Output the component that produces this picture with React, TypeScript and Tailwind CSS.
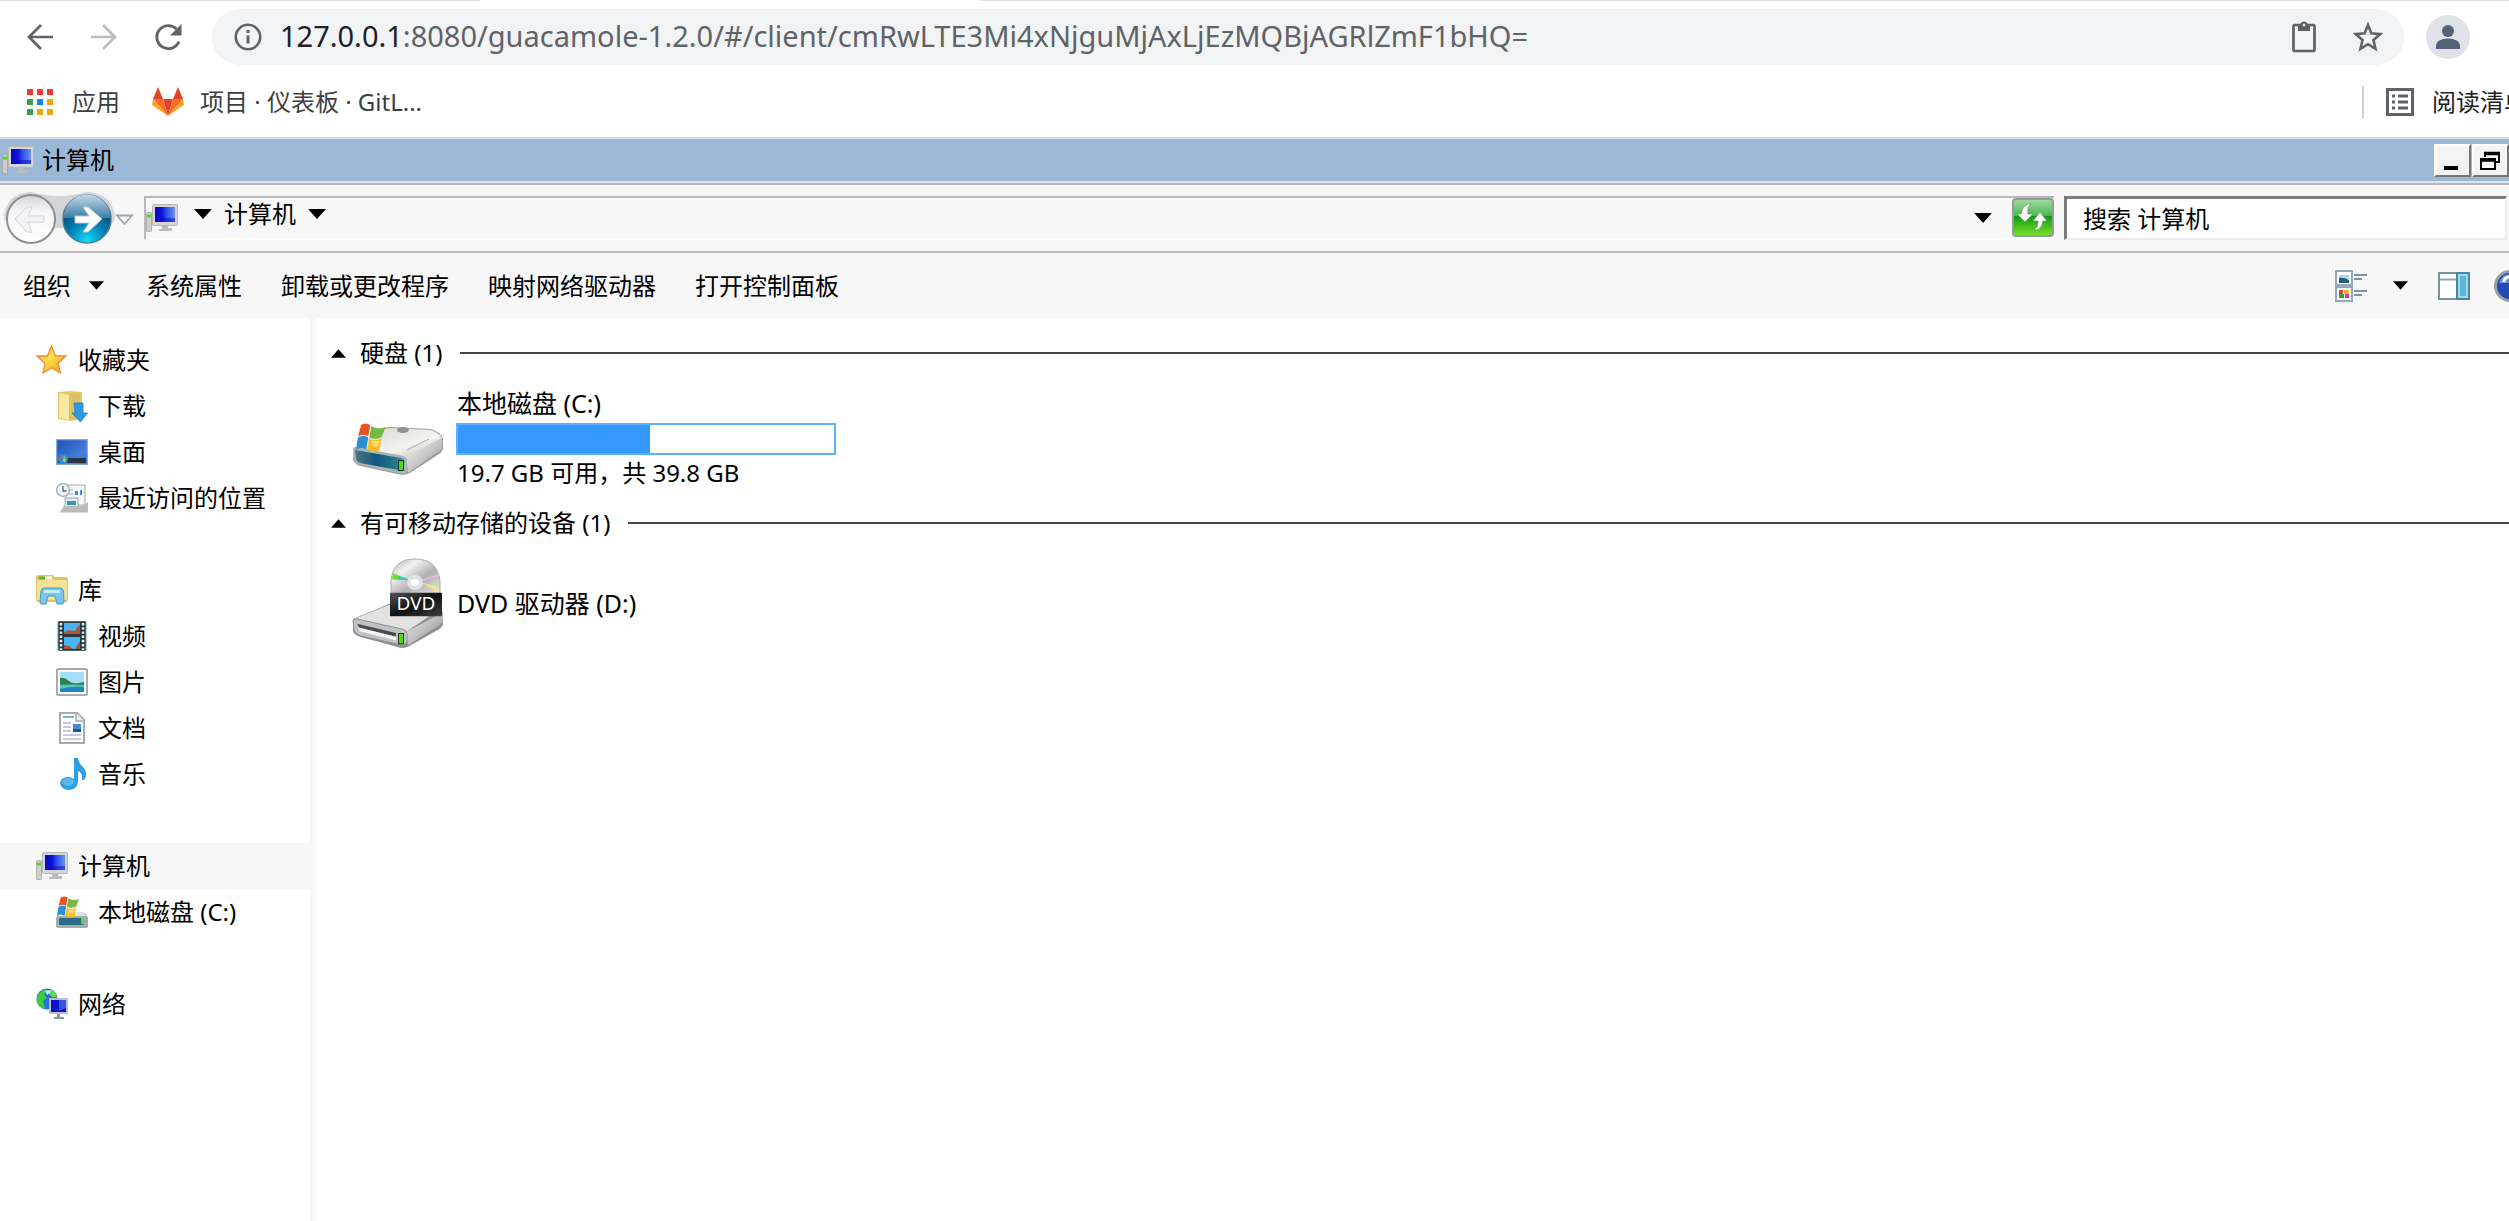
import type { ReactNode } from "react";

const FONT = "font-['Noto_Sans','Noto_Sans_CJK_SC',sans-serif]";

function Triangle({ up = false, size = "md" }: { up?: boolean; size?: "sm" | "md" }) {
  return (
    <svg viewBox="0 0 16 9" className={size === "md" ? "h-[10px] w-[18px] shrink-0" : "h-[9px] w-[15px] shrink-0"} aria-hidden>
      <path d={up ? "M8 0L16 9H0z" : "M0 0H16L8 9z"} fill="#000" />
    </svg>
  );
}

function Computer() {
  return (
    <svg viewBox="0 0 32 28" className="h-7 w-8 shrink-0" aria-hidden>
      <defs>
        <linearGradient id="screen" x1="0" y1="0" x2="1" y2="0">
          <stop offset="0" stopColor="#0a0ab4" />
          <stop offset=".35" stopColor="#0d10dc" />
          <stop offset=".6" stopColor="#2f55e8" />
          <stop offset="1" stopColor="#6d90f0" />
        </linearGradient>
      </defs>
      <rect x="0.5" y="8.5" width="5" height="19" rx="1" fill="#cfcfca" stroke="#a2a29f" strokeWidth="0.8" />
      <rect x="1" y="10.500" width="4" height="3" fill="#4bdc2c" />
      <rect x="6.500" y=".5" width="25" height="21" rx="1" fill="#d3d5d9" stroke="#b4b6ba" />
      <rect x="9" y="3" width="20" height="15" fill="url(#screen)" />
      <path d="M9 14h20v4H9z" fill="#0a10c8" opacity=".55" />
      <path d="M16 22h6v2h4v3H13v-2h3z" fill="#b9bbbd" />
    </svg>
  );
}

function Star() {
  return (
    <svg viewBox="0 0 32 30" className="h-[30px] w-8" aria-hidden>
      <defs>
        <linearGradient id="star" x1="0" y1="0" x2="1" y2="1">
          <stop offset="0" stopColor="#ff9d2a" />
          <stop offset=".45" stopColor="#ffe04c" />
          <stop offset="1" stopColor="#f08a12" />
        </linearGradient>
      </defs>
      <path d="M15.500 1L19.500 11H30l-8 7.500L24.500 28l-9-5-8.500 5 2-9.500L1 11h10.500z" fill="url(#star)" stroke="#ee8c35" strokeWidth="1.300" />
    </svg>
  );
}

function Downloads() {
  return (
    <svg viewBox="0 0 32 32" className="h-8 w-8" aria-hidden>
      <path d="M2 2l12-1 12 1v27l-12 2-12-2z" fill="#e3c766" />
      <path d="M3 3l10 2v25l-10-2z" fill="#f7e9a4" />
      <path d="M13 5l11-3v10h-6v17l-5 2z" fill="#dcc168" />
      <path d="M18 13h9v10h4.500L24.500 32 16 23h3z" fill="#2c98e0" stroke="#1c7cc4" strokeWidth=".8" />
    </svg>
  );
}

function Desktop() {
  return (
    <svg viewBox="0 0 32 26" className="h-[26px] w-8" aria-hidden>
      <defs>
        <linearGradient id="desk" x1="0" y1="0" x2="1" y2="1">
          <stop offset="0" stopColor="#1c4fb4" />
          <stop offset=".7" stopColor="#4680dc" />
          <stop offset="1" stopColor="#2e66c6" />
        </linearGradient>
      </defs>
      <rect x=".5" y=".5" width="31" height="25" fill="url(#desk)" stroke="#87a9d2" strokeWidth="1.600" />
      <rect x="2" y="19" width="28" height="5" fill="#26354a" />
      <circle cx="7" cy="20" r="5" fill="#2290d8" />
      <path d="M4.500 17.500h2.300v2.300H4.500z" fill="#f1592a" />
      <path d="M7.200 17.500h2.300v2.300H7.200z" fill="#8cc63e" />
      <path d="M7.200 20.200h2.300v2.300H7.200z" fill="#ffd034" />
    </svg>
  );
}

function Recent() {
  return (
    <svg viewBox="0 0 32 30" className="h-[30px] w-8" aria-hidden>
      <path d="M10 2h19v20H10z" fill="#f4f5f6" stroke="#a4a8aa" />
      <path d="M13 6h4v2h-4zM13 10h4v2h-4z" fill="#c8ccd0" />
      <path d="M19 8h3v4h-3zM24 7h2v5h-2z" fill="#3f8ee4" />
      <rect x="9" y="15" width="13" height="10" fill="#d8f0f6" stroke="#9eaab0" />
      <path d="M11 18h9v4h-9z" fill="#3c9aa8" />
      <path d="M4 29l4-6h18l6-4v10.500H4z" fill="#b7bbbb" />
      <circle cx="7" cy="7" r="6.400" fill="#eef3f5" stroke="#a3b0b6" strokeWidth="1.400" />
      <path d="M7 3v5h3.500" fill="none" stroke="#4d646f" strokeWidth="1.300" />
    </svg>
  );
}

function Library() {
  return (
    <svg viewBox="0 0 32 30" className="h-[30px] w-8" aria-hidden>
      <path d="M0 2Q0 0 2 0h15l2 2h11q2 0 2 2v21q0 2-2 2H2q-2 0-2-2z" fill="#dfc468" />
      <path d="M1 5h30v20H1z" fill="#f5e298" />
      <rect x="3" y="1.500" width="6" height="3" fill="#57bd2b" />
      <rect x="9" y="1.500" width="7" height="3" fill="#fff" />
      <path d="M5 29q-1 0-1-2l1-11q.500-3 3-3h16q3 0 3.500 3L28 27q0 2-2 2h-5l-2-8h-7l-2 8z" fill="#79c6ea" stroke="#3c9ccf" />
      <path d="M8 15h16v3H8z" fill="#c4ecfb" />
    </svg>
  );
}

function Video() {
  return (
    <svg viewBox="0 0 28 30" className="h-[30px] w-8" aria-hidden>
      <rect x="0" y="0" width="28" height="30" rx="1" fill="#27383d" stroke="#5e9c9e" />
      <path d="M6 2h16v11H6z" fill="#48b4f2" />
      <path d="M6 11l5-2 6 1 3-5 2-1v9H6z" fill="#b4543c" />
      <path d="M6 16h16v12H6z" fill="#48b4f2" />
      <path d="M6 24l5 1 4 3H6zM17 28l5-8v8z" fill="#a5533f" />
      <path d="M3 2v27M25 2v27" stroke="#e8eeee" strokeWidth="2.500" strokeDasharray="2.400 1.800" />
    </svg>
  );
}

function Pictures() {
  return (
    <svg viewBox="0 0 32 28" className="h-7 w-8" aria-hidden>
      <rect x="1" y="1" width="30" height="26" rx="1" fill="#fff" stroke="#a8abac" strokeWidth="2" />
      <rect x="4" y="4" width="24" height="20" fill="#a6def7" />
      <path d="M4 10q5-1 9 3t15 1v4H4z" fill="#2d8350" />
      <path d="M4 17h24v7H4z" fill="#1f86c6" />
      <path d="M4 17q12-1 24 0v2q-12-1-24 2z" fill="#52c5bd" />
    </svg>
  );
}

function Documents() {
  return (
    <svg viewBox="0 0 26 32" className="h-8 w-8" aria-hidden>
      <path d="M1 1h17l7 7v23H1z" fill="#fff" stroke="#a9abab" strokeWidth="2" />
      <path d="M17 1v8h8" fill="#eee" stroke="#a9abab" strokeWidth="1.500" />
      <path d="M4 5h11" stroke="#53a9b4" strokeWidth="1.600" />
      <path d="M4 11h8M4 15h8M4 19h8M4 23h18M4 27h18" stroke="#b9b5d6" strokeWidth="1.400" />
      <rect x="14" y="12" width="8" height="8" fill="#3d8fe0" />
      <path d="M14 17h8v3h-8z" fill="#22596e" />
    </svg>
  );
}

function Music() {
  return (
    <svg viewBox="0 0 32 32" className="h-8 w-8" aria-hidden>
      <path d="M18 0h4q1 6 5 9 6 6 1 13h-2q1-7-4-9v11q-1 8-10 8-7-1-8-7 1-6 8-6 4 0 6 2z" fill="#2d9fe4" />
      <ellipse cx="12" cy="24" rx="6" ry="4" fill="#74c8f5" opacity=".6" />
    </svg>
  );
}

function Flag({ x, y, s }: { x: number; y: number; s: number }) {
  return (
    <g transform={`translate(${x} ${y}) scale(${s})`}>
      <path d="M5 2Q9-1 14 2L12 13Q7 10 2 13z" fill="#e8531f" />
      <path d="M15 3q6 4 14 1l-4 10q-6 3-12 0z" fill="#76b843" />
      <path d="M2 14q5-3 10 0l-2 12q-5-3-10 0z" fill="#2b8fd6" />
      <path d="M13 15q6 4 12 0l-2 12q-6 3-12-1z" fill="#fbbd25" />
      <path d="M16 17q4 2 7 0l-1 5q-3 2-7 0z" fill="#ffe27a" opacity=".8" />
    </g>
  );
}

function SmallDrive() {
  return (
    <svg viewBox="0 0 32 32" className="h-8 w-8" aria-hidden>
      <path d="M3 17h26l3 5v8q0 2-3 2H3q-3 0-3-2v-8z" fill="#a4acb0" />
      <path d="M4 16h24l2 4H2z" fill="#dde1e2" />
      <rect x="3" y="22" width="25" height="7" rx="1" fill="#2b6c88" />
      <rect x="25" y="22" width="3" height="6" fill="#5bdc2f" />
      <Flag x={1} y={0} s={0.76} />
    </svg>
  );
}

function Network() {
  return (
    <svg viewBox="0 0 32 32" className="h-8 w-8" aria-hidden>
      <circle cx="11" cy="11" r="10.500" fill="#2a6ee0" />
      <path d="M2 7q4-6 9-6l-3 6 3 3-4 3 2 8Q1 19 .500 12z" fill="#3ccf3a" />
      <path d="M14 1q6 2 7 8h-5l-3-3z" fill="#65d84b" />
      <path d="M9 3q5-2 6 1l-4 3z" fill="#bdf2ff" />
      <rect x="13" y="10" width="19" height="16" fill="#b8bfd6" />
      <rect x="15" y="12" width="15" height="12" fill="#0c14c6" />
      <path d="M23 12h7v8l-7 3z" fill="#3551ea" />
      <path d="M21 26h3v3h4v2H18v-2h3z" fill="#8f959e" />
    </svg>
  );
}

function HardDrive() {
  return (
    <svg viewBox="0 0 92 54" className="h-[54px] w-[92px]" aria-hidden>
      <defs>
        <linearGradient id="hdTop" x1="0" y1="0" x2="1" y2="1">
          <stop offset="0" stopColor="#d4d4d2" />
          <stop offset=".6" stopColor="#f3f3f1" />
          <stop offset="1" stopColor="#b5b5b3" />
        </linearGradient>
        <linearGradient id="hdSide" x1="0" y1="0" x2="1" y2="1">
          <stop offset="0" stopColor="#f4f4f2" />
          <stop offset=".5" stopColor="#c9cac8" />
          <stop offset="1" stopColor="#868888" />
        </linearGradient>
        <linearGradient id="hdFace" x1="0" y1="0" x2="1" y2="0">
          <stop offset="0" stopColor="#4c7684" />
          <stop offset=".45" stopColor="#10587e" />
          <stop offset="1" stopColor="#2c8c90" />
        </linearGradient>
      </defs>
      <path d="M2 26L32 5q3-1 7-1l40 2q9 3 12 9v11q-1 3-4 5L58 50q-4 2-8 2L8 43q-5-2-7-6z" fill="#9b9d9d" />
      <path d="M2 25L32 6q3-1 7-1l40 2q8 3 11 8L54 35 4 28z" fill="url(#hdTop)" />
      <path d="M54 34L90 15v11L56 50z" fill="url(#hdSide)" />
      <path d="M1 26q0-2 3-2l47 9q4 1 4 5v10q-1 3-4 3L7 42q-5-2-5-6z" fill="#a9b2b4" />
      <path d="M3 27l46 8q3 1 3 4v9L8 40q-4-2-4-5z" fill="url(#hdFace)" />
      <rect x="46" y="37" width="6" height="11" fill="#123b2d" />
      <rect x="47" y="38" width="4" height="9" fill="#49d91c" />
      <ellipse cx="51" cy="7" rx="6" ry="3" fill="#8e9090" />
      <path d="M55 27l22-11" stroke="#aaa" fill="none" />
      <Flag x={4} y={0} s={1.02} />
    </svg>
  );
}

function DvdDrive() {
  return (
    <svg viewBox="0 0 92 96" preserveAspectRatio="none" className="h-[90px] w-[92px]" aria-hidden>
      <defs>
        <linearGradient id="disc" x1="0" y1="0" x2="1" y2="1">
          <stop offset="0" stopColor="#a8a8a8" />
          <stop offset=".3" stopColor="#f2f2f2" />
          <stop offset=".6" stopColor="#b0b0b2" />
          <stop offset="1" stopColor="#e6e6e6" />
        </linearGradient>
        <linearGradient id="plate" x1="0" y1="0" x2="1" y2="1">
          <stop offset="0" stopColor="#545454" />
          <stop offset=".5" stopColor="#111" />
          <stop offset="1" stopColor="#3c3c3c" />
        </linearGradient>
        <linearGradient id="dvdSide" x1="0" y1="0" x2="1" y2="1">
          <stop offset="0" stopColor="#f0f0ee" />
          <stop offset=".5" stopColor="#bfc0be" />
          <stop offset="1" stopColor="#7b7c7c" />
        </linearGradient>
      </defs>
      <path d="M1 65l36-16 50 5q4 2 4 6v11q-1 3-4 5L57 94q-4 2-8 2L8 84q-6-2-7-6z" fill="#8f9091" />
      <path d="M2 65l35-15 50 5-33 24-49-10z" fill="#e2e2e0" />
      <path d="M54 79l37-21v11L56 93z" fill="url(#dvdSide)" />
      <path d="M1 67q0-3 4-2l46 11q4 1 4 5v8q-1 4-5 4L8 83q-5-2-6-6z" fill="#c0c1c3" stroke="#8b8c8e" />
      <path d="M5 70l39 10v4L7 74z" fill="#4b4c52" />
      <path d="M6 74l38 10v4L8 78z" fill="#f5f5fb" />
      <rect x="46" y="80" width="6" height="12" fill="#1e3a1b" />
      <rect x="47" y="81" width="4" height="10" fill="#49d91c" />
      <path d="M39 38V24Q41 1 63 1t25 23v14z" fill="url(#disc)" stroke="#aaa" />
      <path d="M41 16l18 8-19-1z" fill="#6be22f" />
      <path d="M47 19l12 5-13-1z" fill="#3ac1d6" />
      <path d="M87 31l-18-5 17 10z" fill="#efe78c" />
      <path d="M87 18l-18 6M40 35l18-8" stroke="#e6b7dc" strokeWidth="1.500" />
      <circle cx="63" cy="26" r="8" fill="#dfe3e6" />
      <circle cx="63" cy="26" r="4" fill="#fff" />
      <rect x="38" y="37" width="52" height="25" rx="1" fill="url(#plate)" />
      <text x="64" y="56" textAnchor="middle" fontSize="19" fill="#fff" fontFamily="Noto Sans, sans-serif">DVD</text>
    </svg>
  );
}

function BrowserBar() {
  return (
    <header className="overflow-hidden bg-white">
      <div className="flex h-px">
        <div className="w-[480px] bg-[#dee1e6]" />
        <div className="w-[500px]" />
        <div className="flex-1 bg-[#dee1e6]" />
      </div>
      <div className="flex h-[72px] items-center pr-[39px] pl-6">
        <button aria-label="后退" className="mr-8">
          <svg viewBox="0 0 32 32" className="h-8 w-8" fill="none" stroke="#5f6368" strokeWidth="2.700">
            <path d="M29 16H5M17 4L5 16l12 12" />
          </svg>
        </button>
        <button aria-label="前进" className="mr-8">
          <svg viewBox="0 0 32 32" className="h-8 w-8" fill="none" stroke="#babcbe" strokeWidth="2.700">
            <path d="M3 16h24M15 4l12 12-12 12" />
          </svg>
        </button>
        <button aria-label="重新加载" className="mr-7">
          <svg viewBox="0 0 32 32" className="h-8 w-8">
            <path d="M27 20.500A11.500 11.500 0 1 1 24.500 8" fill="none" stroke="#5f6368" strokeWidth="2.900" />
            <path d="M29.500 3v11.500H18z" fill="#5f6368" />
          </svg>
        </button>
        <div className="flex h-14 min-w-0 flex-1 items-center rounded-full bg-[#f1f3f4] pr-5 pl-[22px]">
          <svg viewBox="0 0 28 28" className="mr-[18px] h-7 w-7 shrink-0" aria-hidden>
            <circle cx="14" cy="14" r="12.200" fill="none" stroke="#5f6368" strokeWidth="2.600" />
            <path d="M12.500 12.500h3V20.500h-3zM12.500 7h3v3h-3z" fill="#5f6368" />
          </svg>
          <a href="#/client" className="flex-1 truncate pb-0.5 text-[29px] leading-9 text-[#5f6368]">
            <span className="text-[#202124]">127.0.0.1</span>:8080/guacamole-1.2.0/#/client/cmRwLTE3Mi4xNjguMjAxLjEzMQBjAGRlZmF1bHQ=
          </a>
          <button aria-label="剪贴板" className="mr-8">
            <svg viewBox="0 0 32 36" className="h-9 w-8">
              <rect x="5.500" y="6" width="21" height="26" rx="1.500" fill="none" stroke="#5f6368" strokeWidth="2.700" />
              <path d="M10 6h2.500a3.500 3.500 0 0 1 7 0H22v6H10z" fill="#5f6368" />
              <circle cx="16" cy="6" r="1.300" fill="#f1f3f4" />
            </svg>
          </button>
          <button aria-label="收藏">
            <svg viewBox="0 0 32 32" className="h-8 w-8">
              <path d="M16 4l3.300 8.300 9 .8-6.800 5.900 2 8.800L16 23.200l-7.500 4.600 2-8.800-6.800-5.900 9-.8z" fill="none" stroke="#5f6368" strokeWidth="2.600" />
            </svg>
          </button>
        </div>
        <button aria-label="个人资料" className="ml-[22px] h-11 w-11">
          <svg viewBox="0 0 44 44">
            <circle cx="22" cy="22" r="22" fill="#dee1e6" />
            <circle cx="22" cy="16" r="6" fill="#56617a" />
            <path d="M10 34v-4q1-6 12-6.500Q33 24 34 30v4z" fill="#56617a" />
          </svg>
        </button>
      </div>
      <nav className="flex h-16 items-center pl-[26px] text-2xl leading-8 whitespace-nowrap text-[#3c4043]">
        <a href="#apps" className="flex items-center gap-[18px] pb-1.5">
          <svg viewBox="0 0 28 28" className="h-7 w-7" aria-hidden>
            <path d="M1 1h6v6H1zM11 1h6v6h-6zM21 1h6v6h-6z" fill="#f23a2f" />
            <path d="M1 11h6v6H1zM1 21h6v6H1z" fill="#34a052" />
            <path d="M11 11h6v6h-6z" fill="#1a82f7" />
            <path d="M21 11h6v6h-6zM11 21h6v6h-6zM21 21h6v6h-6z" fill="#efa50b" />
          </svg>
          应用
        </a>
        <a href="#gitlab" className="ml-8 flex items-center gap-4 pb-1.5">
          <svg viewBox="0 0 32 30" className="h-[30px] w-8" aria-hidden>
            <path d="M6 0l5 12H1zM26 0l5 12H21z" fill="#e24329" />
            <path d="M11 12h10l-5 17z" fill="#e24329" />
            <path d="M1 12h10l5 17zM31 12H21l-5 17z" fill="#fc6d26" />
            <path d="M1 12l-1 6 16 11zM31 12l1 6-16 11z" fill="#fca326" />
          </svg>
          项目 · 仪表板 · GitL...
        </a>
        <div className="ml-auto flex w-[147px] shrink-0 items-center overflow-hidden pb-1.5">
          <div className="mr-[22px] h-8 w-[2px] shrink-0 bg-[#cdcfd2]" />
          <button className="flex items-center gap-[18px] text-[#202124]">
            <svg viewBox="0 0 28 28" className="h-7 w-7 shrink-0" aria-hidden>
              <rect x="1.500" y="1.500" width="25" height="25" fill="none" stroke="#5f6368" strokeWidth="3" />
              <path d="M6 6.500h3v3H6zM6 12.500h3v3H6zM6 18.500h3v3H6zM12 6.500h10v3H12zM12 12.500h10v3H12zM12 18.500h10v3H12z" fill="#5f6368" />
            </svg>
            阅读清单
          </button>
        </div>
      </nav>
    </header>
  );
}

function TitleBar() {
  return (
    <div className="flex h-[46px] items-center border-t-2 border-b-2 border-t-[#dadce0] border-b-[#dde3ea] bg-[#9bb8d6] pl-[2px]">
      <Computer />
      <h1 className="ml-2 text-2xl leading-8">计算机</h1>
      <div className="ml-auto flex gap-px">
        <button aria-label="最小化" className="h-[33px] w-[37px] border-2 border-t-white border-r-[#767676] border-b-[#767676] border-l-white bg-[#f3f3f3]">
          <svg viewBox="0 0 33 29">
            <path d="M8 20h14v4H8z" />
          </svg>
        </button>
        <button aria-label="还原" className="h-[33px] w-[37px] border-2 border-t-white border-r-[#767676] border-b-[#767676] border-l-white bg-[#f3f3f3]">
          <svg viewBox="0 0 33 29" fill="none" stroke="#000" strokeWidth="2">
            <path d="M11 11V7h14v9h-4" />
            <path d="M10 7.500h16M6 14h16" strokeWidth="3.500" />
            <path d="M7 13h14v10H7z" />
          </svg>
        </button>
      </div>
    </div>
  );
}

function AddressBar() {
  return (
    <div className="flex h-[70px] items-center border-t-2 border-b-2 border-[#b8b8b8] bg-[#f7f7f7] pr-[2px]">
      <div className="flex w-[144px] shrink-0 items-center pl-[2px]">
        <svg viewBox="0 0 132 54" className="h-[54px] w-[132px]">
          <defs>
            <linearGradient id="back" x1="0" y1="0" x2="0" y2="1">
              <stop offset="0" stopColor="#d3d5d8" />
              <stop offset=".35" stopColor="#f6f6f8" />
              <stop offset="1" stopColor="#fff" />
            </linearGradient>
            <linearGradient id="fwdTop" x1="0" y1="0" x2="0" y2="1">
              <stop offset="0" stopColor="#c4dbe8" />
              <stop offset="1" stopColor="#3a7ea6" />
            </linearGradient>
            <radialGradient id="fwd" cx=".5" cy=".95" r=".65">
              <stop offset="0" stopColor="#12dcf8" />
              <stop offset=".55" stopColor="#0585bd" />
              <stop offset="1" stopColor="#075580" />
            </radialGradient>
          </defs>
          <path d="M29 1q15 4 28 4T85 1q27 2 28 27l-10 16q-46-14-85 0L2 28Q3 2 29 1z" fill="#d5d4d6" />
          <circle cx="29" cy="28" r="24" fill="url(#back)" stroke="#8b8f96" strokeWidth="2" />
          <circle cx="85" cy="28" r="24" fill="url(#fwd)" stroke="#4a7c99" strokeWidth="1.500" />
          <path d="M61.500 27a23.500 23.500 0 0 1 47 0z" fill="url(#fwdTop)" />
          <path d="M13 28l12-12h5l-4 9h16v6H26l4 10h-5z" fill="#f3f2f4" stroke="#d3d2d6" />
          <path d="M73 25h14l-6-9h5l14 12-14 13h-5l6-9H73z" fill="#fff" stroke="#b5cad7" />
          <path d="M115 24.500h15l-7.500 8.500z" fill="#fff" stroke="#9ba4aa" strokeWidth="1.800" />
        </svg>
      </div>
      <div className="flex h-[44px] min-w-0 flex-1 items-center border-t-2 border-b-2 border-l-2 border-t-[#b8b8b8] border-b-white border-l-[#b8b8b8]">
        <Computer />
        <button aria-label="位置" className="ml-4 pb-2">
          <Triangle />
        </button>
        <button className="ml-3 flex items-center gap-3 pb-2 text-2xl leading-8">
          计算机
          <Triangle />
        </button>
        <button aria-label="以前的位置" className="mr-5 ml-auto">
          <Triangle />
        </button>
        <button aria-label="刷新">
          <svg viewBox="0 0 42 40" className="h-10 w-[42px]">
            <defs>
              <linearGradient id="go" x1="0" y1="0" x2="0" y2="1">
                <stop offset="0" stopColor="#a3dca3" />
                <stop offset=".45" stopColor="#4cb850" />
                <stop offset=".46" stopColor="#0b9a14" />
                <stop offset="1" stopColor="#7be32a" />
              </linearGradient>
            </defs>
            <rect x="1" y="1" width="40" height="37" rx="3" fill="url(#go)" stroke="#969c98" strokeWidth="2" />
            <path d="M19 6q-4 3-3 10h5l-8 8-8-8h4q1-8 7-10z" fill="#fff" stroke="#5f9a5f" strokeWidth=".8" />
            <path d="M22 32q5-4 4-9h-5l7-9 7 9h-4q-1 7-6 9z" fill="#fff" stroke="#5f9a5f" strokeWidth=".8" />
          </svg>
        </button>
      </div>
      <input
        type="text"
        aria-label="搜索"
        placeholder="搜索 计算机"
        className="ml-[10px] h-[44px] w-[443px] shrink-0 border-t-[3px] border-r-2 border-b-2 border-l-[3px] border-t-[#7b7b7b] border-r-[#ececec] border-b-[#ececec] border-l-[#7b7b7b] bg-white pl-4 text-2xl leading-8 placeholder:text-black"
      />
    </div>
  );
}

function CommandBar() {
  return (
    <div className="flex h-[65px] items-center overflow-hidden bg-[#f7f7f7] pl-[23px] text-2xl leading-8 whitespace-nowrap">
      <button className="flex items-center gap-[18px]">
        组织
        <Triangle size="sm" />
      </button>
      <div className="ml-[42px] flex gap-[39px]">
        {["系统属性", "卸载或更改程序", "映射网络驱动器", "打开控制面板"].map((label) => (
          <button key={label}>{label}</button>
        ))}
      </div>
      <button aria-label="更改视图" className="ml-auto">
        <svg viewBox="0 0 34 32" className="h-8 w-[34px]">
          <path d="M1 1h16v14H1zM1 17h16v14H1z" fill="#fff" stroke="#96a5bc" strokeWidth="2" />
          <path d="M4 5h10v4H4z" fill="#a9dcec" />
          <path d="M4 8q5-1 10 2v3H4z" fill="#1e6470" />
          <path d="M4 20h4v4H4z" fill="#e2452c" />
          <path d="M9 20h5v4H9z" fill="#f2b72a" />
          <path d="M4 24h5v4H4z" fill="#35a037" />
          <path d="M10 24h4v4h-4z" fill="#c43fa0" />
          <path d="M19 5h13M19 9h8M19 21h13M19 25h8" stroke="#7f90a3" strokeWidth="2.200" />
        </svg>
      </button>
      <button aria-label="更多视图" className="mr-[30px] ml-6">
        <Triangle size="sm" />
      </button>
      <button aria-label="预览窗格">
        <svg viewBox="0 0 32 28" className="h-7 w-8">
          <rect x="1" y="1" width="30" height="26" fill="#fff" stroke="#7792a8" strokeWidth="2" />
          <path d="M2 7.500h18" stroke="#8ba3b8" strokeWidth="2" />
          <rect x="19" y="1" width="12" height="26" fill="#8fe0ee" stroke="#54839c" strokeWidth="2" />
          <rect x="22" y="4" width="6" height="20" fill="#63b4dc" />
        </svg>
      </button>
      <button aria-label="帮助" className="ml-6 w-[15px] overflow-hidden">
        <svg viewBox="0 0 32 32" className="h-8 w-8 max-w-none">
          <circle cx="16" cy="16" r="14.500" fill="#2149b8" stroke="#9a9da3" strokeWidth="3" />
          <path d="M5 13q3-9 11-9v9z" fill="#6d8fe2" />
          <path d="M10 12q0-5 6-5t6 5q0 3-4 5v3" fill="none" stroke="#fff" strokeWidth="3" />
          <circle cx="17" cy="24" r="2" fill="#fff" />
        </svg>
      </button>
    </div>
  );
}

type Entry = { label: string; icon: ReactNode; root?: boolean; active?: boolean };

const TREE: Entry[][] = [
  [
    { label: "收藏夹", icon: <Star />, root: true },
    { label: "下载", icon: <Downloads /> },
    { label: "桌面", icon: <Desktop /> },
    { label: "最近访问的位置", icon: <Recent /> },
  ],
  [
    { label: "库", icon: <Library />, root: true },
    { label: "视频", icon: <Video /> },
    { label: "图片", icon: <Pictures /> },
    { label: "文档", icon: <Documents /> },
    { label: "音乐", icon: <Music /> },
  ],
  [
    { label: "计算机", icon: <Computer />, root: true, active: true },
    { label: "本地磁盘 (C:)", icon: <SmallDrive /> },
  ],
  [{ label: "网络", icon: <Network />, root: true }],
];

function Sidebar() {
  return (
    <nav className="flex w-[316px] shrink-0 flex-col gap-[46px] border-r-[6px] border-[#f7f7f7] pt-[19px]">
      {TREE.map((group) => (
        <ul key={group[0].label}>
          {group.map((item) => (
            <li key={item.label} className={item.active ? "bg-[#f7f7f7]" : ""}>
              <a
                href="#"
                className={`flex h-[46px] items-center gap-[10px] text-2xl leading-8 ${item.root ? "pl-9" : "pl-14"}`}
              >
                {item.icon}
                {item.label}
              </a>
            </li>
          ))}
        </ul>
      ))}
    </nav>
  );
}

function GroupHeader({ title }: { title: string }) {
  return (
    <h2 className="flex h-8 items-center text-2xl leading-8">
      <button className="flex items-center gap-[14px]">
        <Triangle up size="sm" />
        {title}
      </button>
      <span className="ml-[18px] h-[2px] flex-1 bg-[#444]" />
    </h2>
  );
}

function Drives() {
  const used = 51;
  return (
    <main className="min-w-0 flex-1 pt-[19px] pl-[15px]">
      <section>
        <GroupHeader title="硬盘 (1)" />
        <div className="mt-4 flex items-end gap-3 pl-[21px]">
          <div className="pb-3">
            <HardDrive />
          </div>
          <div>
            <p className="pl-px text-[25px] leading-9">本地磁盘 (C:)</p>
            <div className="my-0.5 h-8 w-[380px] border-2 border-[#5eb0ff] bg-white">
              <div className="h-full bg-[#3399ff]" style={{ width: `${used}%` }} />
            </div>
            <p className="pl-px text-2xl leading-8">19.7 GB 可用，共 39.8 GB</p>
          </div>
        </div>
      </section>
      <section className="mt-[18px]">
        <GroupHeader title="有可移动存储的设备 (1)" />
        <div className="mt-[19px] flex items-center gap-3 pl-[21px]">
          <DvdDrive />
          <p className="pl-px text-[25px] leading-9">DVD 驱动器 (D:)</p>
        </div>
      </section>
    </main>
  );
}

export default function App() {
  return (
    <div className={`flex min-h-screen flex-col overflow-x-hidden bg-white text-black ${FONT}`}>
      <BrowserBar />
      <TitleBar />
      <AddressBar />
      <CommandBar />
      <div className="flex flex-1">
        <Sidebar />
        <Drives />
      </div>
    </div>
  );
}
